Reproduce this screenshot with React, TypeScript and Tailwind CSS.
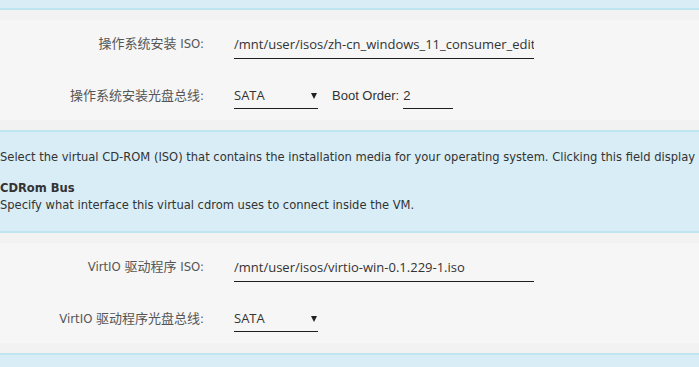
const labelFont = {
  fontFamily: '"DejaVu Sans Condensed", "Noto Sans CJK SC", sans-serif',
};
const inputFont = { fontFamily: '"Open Sans", "Liberation Sans", sans-serif' };

type TFieldRowProps = {
  label: string;
  children: React.ReactNode;
  className?: string;
};

const FieldRow = ({ label, children, className = "" }: TFieldRowProps) => (
  <div className={`flex items-center ${className}`}>
    <div
      className="w-[204px] shrink-0 text-right text-[13px] text-[#555] whitespace-nowrap"
      style={labelFont}
    >
      {label}
    </div>
    <div className="flex h-full items-center pl-[30px]">{children}</div>
  </div>
);

const IsoInput = ({ value }: { value: string }) => (
  <input
    readOnly
    value={value}
    className="h-full w-[300px] border-b border-[#1e1e1e] bg-transparent text-[13px] text-[#333] outline-none"
    style={inputFont}
  />
);

const BusSelect = () => (
  <div className="relative flex h-full w-[84px] items-center border-b border-[#1e1e1e]">
    <span className="text-[13px] text-[#333]" style={inputFont}>
      SATA
    </span>
    <svg
      className="absolute right-[1px] top-1/2 -translate-y-1/2"
      width="6"
      height="6"
      viewBox="0 0 6 6"
    >
      <polygon points="0,0 6,0 3,6" fill="#222" />
    </svg>
  </div>
);

const HelpBox = ({
  children,
  className = "",
}: {
  children?: React.ReactNode;
  className?: string;
}) => (
  <div
    className={`border-y-2 border-[#bfe5f1] bg-[#d9edf6] text-[12.8px] leading-[17px] text-[#333] whitespace-nowrap overflow-hidden ${className}`}
    style={labelFont}
  >
    {children}
  </div>
);

export default function App() {
  return (
    <div className="h-[367px] w-[699px] overflow-hidden bg-[#f2f2f2]">
      <div className="h-[10px] border-b-2 border-[#bfe5f1] bg-[#d9edf6]" />

      <section className="mt-[10px] h-[100px] bg-[#f6f6f6] pt-[9px]">
        <FieldRow label="操作系统安装 ISO:" className="h-[30px]">
          <IsoInput value="/mnt/user/isos/zh-cn_windows_11_consumer_editions_version_22h2_x64_dvd.iso" />
        </FieldRow>
        <FieldRow label="操作系统安装光盘总线:" className="mt-[24px] h-[26px]">
          <BusSelect />
          <span
            className="ml-[14px] text-[13px] text-[#333]"
            style={{ fontFamily: '"Liberation Sans", sans-serif' }}
          >
            Boot Order:
          </span>
          <input
            readOnly
            value="2"
            className="ml-[4px] h-full w-[50px] border-b border-[#1e1e1e] bg-transparent text-[13px] text-[#333] outline-none"
            style={{ fontFamily: '"Liberation Sans", sans-serif' }}
          />
        </FieldRow>
      </section>

      <HelpBox className="mt-[10px] h-[103px] pt-[16px]">
        <p>
          Select the virtual CD-ROM (ISO) that contains the installation media for your operating system. Clicking this field display
        </p>
        <p className="mt-[14px] font-bold">CDRom Bus</p>
        <p>Specify what interface this virtual cdrom uses to connect inside the VM.</p>
      </HelpBox>

      <section className="mt-[10px] h-[100px] bg-[#f6f6f6] pt-[9px]">
        <FieldRow label="VirtIO 驱动程序 ISO:" className="h-[30px]">
          <IsoInput value="/mnt/user/isos/virtio-win-0.1.229-1.iso" />
        </FieldRow>
        <FieldRow label="VirtIO 驱动程序光盘总线:" className="mt-[24px] h-[26px]">
          <BusSelect />
        </FieldRow>
      </section>

      <HelpBox className="mt-[10px] h-[20px]" />
    </div>
  );
}
